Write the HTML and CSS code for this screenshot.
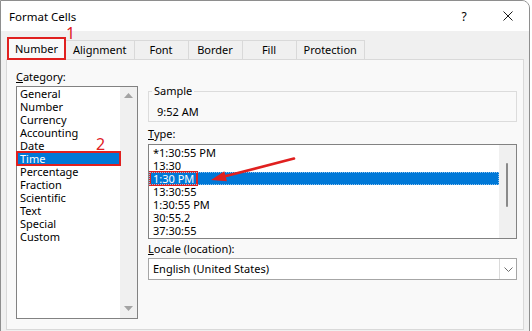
FILE: index.html
```html
<!DOCTYPE html>
<html lang="en">
<head>
<meta charset="utf-8">
<title>Format Cells</title>
<link rel="stylesheet" href="styles.css">
</head>
<body>
<div class="window">
  <header class="titlebar">
    <span class="title">Format Cells</span>
    <span class="caption-btn help">?</span>
    <span class="caption-btn close">
      <svg width="10" height="10" viewBox="0 0 10 10"><path d="M0.5 0.5 L9.5 9.5 M9.5 0.5 L0.5 9.5" stroke="#1a1a1a" stroke-width="1" fill="none"/></svg>
    </span>
  </header>

  <nav class="tabs">
    <div class="tab active">Number<span class="mark mark-1">1</span></div>
    <div class="tab">Alignment</div>
    <div class="tab">Font</div>
    <div class="tab">Border</div>
    <div class="tab">Fill</div>
    <div class="tab">Protection</div>
  </nav>

  <section class="panel">
    <div class="category">
      <div class="label"><u>C</u>ategory:</div>
      <div class="listbox cat-list">
        <ul class="items">
          <li>General</li>
          <li>Number</li>
          <li>Currency</li>
          <li>Accounting</li>
          <li>Date</li>
          <li class="selected boxed">Time<span class="mark mark-2">2</span></li>
          <li>Percentage</li>
          <li>Fraction</li>
          <li>Scientific</li>
          <li>Text</li>
          <li>Special</li>
          <li>Custom</li>
        </ul>
        <div class="vscroll arrows">
          <svg class="arrow" width="9" height="5" viewBox="0 0 9 5"><path d="M0 5 L4.5 0 L9 5 Z" fill="#a3a3a3"/></svg>
          <svg class="arrow" width="9" height="5" viewBox="0 0 9 5"><path d="M0 0 L4.5 5 L9 0 Z" fill="#a3a3a3"/></svg>
        </div>
      </div>
    </div>

    <div class="details">
      <fieldset class="sample">
        <legend>Sample</legend>
        <div class="sample-value">9:52 AM</div>
      </fieldset>

      <div class="label label-type"><u>T</u>ype:</div>
      <div class="listbox type-list">
        <ul class="items">
          <li>*1:30:55 PM</li>
          <li>13:30</li>
          <li class="selected focused"><span class="text-box">1:30 PM</span></li>
          <li>13:30:55</li>
          <li>1:30:55 PM</li>
          <li>30:55.2</li>
          <li>37:30:55</li>
        </ul>
        <div class="vscroll thin"><div class="thumb"></div></div>
      </div>

      <div class="label label-locale"><u>L</u>ocale (location):</div>
      <div class="combo">
        <span class="combo-text">English (United States)</span>
        <span class="combo-btn">
          <svg width="9" height="5" viewBox="0 0 9 5"><path d="M0.5 0.5 L4.5 4.5 L8.5 0.5" stroke="#6e6e6e" stroke-width="1" fill="none"/></svg>
        </span>
      </div>
    </div>
  </section>
</div>

<svg class="red-arrow" width="532" height="331" viewBox="0 0 532 331">
  <line x1="294" y1="158.5" x2="224" y2="176.6" stroke="#e0201f" stroke-width="2.6" stroke-linecap="round"/>
  <polygon points="211,180 224.3,171.3 226.9,181.3" fill="#e0201f"/>
</svg>
</body>
</html>
```

FILE: styles.css
```css
* {
  box-sizing: border-box;
}

body {
  margin: 0;
  width: 532px;
  height: 331px;
  overflow: hidden;
  position: relative;
  background: #ffffff;
  font-family: "Noto Sans", "Open Sans", sans-serif;
  font-size: 11px;
  color: #000;
}

.window {
  width: 530px;
  height: 332px;
  border: 1px solid #8e8e8e;
  border-top-right-radius: 8px;
  background: #f0f0f0;
  overflow: hidden;
}

/* title bar */
.titlebar {
  height: 30px;
  background: #ffffff;
  display: flex;
  align-items: center;
  padding-left: 8px;
}

.title {
  flex: 1;
  font-size: 11.5px;
}

.caption-btn {
  height: 30px;
  display: flex;
  align-items: center;
  justify-content: center;
}

.help {
  width: 46px;
  font-size: 12px;
}

.close {
  width: 42px;
}

/* tabs */
.tabs {
  display: flex;
  align-items: flex-end;
  height: 28px;
  padding-left: 6px;
}

.tab {
  height: 19px;
  min-width: 55px;
  padding: 0 7px;
  margin-right: -1px;
  text-align: center;
  line-height: 18px;
  border: 1px solid #d9d9d9;
  border-bottom: none;
  background: #f0f0f0;
}

.tab.active {
  position: relative;
  z-index: 1;
  height: 23px;
  margin-bottom: -1px;
  line-height: 22px;
  background: #f9f9f9;
  border-color: #e0201f;
  outline: 2px solid #e0201f;
  outline-offset: -2px;
}

.mark {
  position: absolute;
  color: #e0201f;
  font-size: 16px;
  line-height: 16px;
}

.mark-1 {
  left: 58px;
  top: -13px;
}

.mark-2 {
  left: 79px;
  top: -16px;
}

/* panel */
.panel {
  margin-left: 5px;
  width: 518px;
  height: 271px;
  border: 1px solid #d9d9d9;
  background: #f9f9f9;
  display: flex;
  gap: 10px;
  padding: 10px 6px 0 9px;
}

.category {
  width: 122px;
}

.label {
  line-height: 14px;
  height: 14px;
  margin-bottom: 2px;
}

.listbox {
  display: flex;
  background: #ffffff;
  border: 1px solid #828282;
}

.items {
  flex: 1;
  margin: 0;
  padding: 0;
  list-style: none;
}

.items li {
  height: 13px;
  line-height: 13px;
  padding-left: 3px;
  white-space: nowrap;
}

.items li.selected {
  position: relative;
  background: #0078d7;
  color: #ffffff;
}

.items li.boxed {
  outline: 2px solid #e0201f;
  outline-offset: -1px;
}

.cat-list {
  height: 233px;
}

.vscroll {
  width: 17px;
  background: #f0f0f0;
}

.vscroll.arrows {
  display: flex;
  flex-direction: column;
  justify-content: space-between;
  align-items: center;
  padding: 6px 0 7px;
}

/* right column */
.details {
  flex: 1;
  display: flex;
  flex-direction: column;
}

.sample {
  margin: 15px 0 0;
  padding: 0 8px 2px;
  border: 1px solid #dcdcdc;
  min-width: 0;
}

.sample legend {
  padding: 0 2px;
  margin-left: -5px;
  line-height: 12px;
}

.sample-value {
  margin-top: 8px;
  line-height: 14px;
}

.label-type {
  margin-top: 5px;
  margin-bottom: 3px;
}

.type-list {
  height: 95px;
}

.type-list .items {
  padding-top: 1px;
}

.type-list .items li {
  padding-left: 4px;
}

.type-list li.focused {
  outline: 1px dotted #8cc2ee;
  outline-offset: -1px;
}

.text-box {
  display: inline-block;
  height: 13px;
  margin-left: -3px;
  padding: 0 3px 0 3px;
  outline: 2px solid #e0201f;
  outline-offset: -1px;
}

.vscroll.thin {
  padding: 18px 0 0 7px;
}

.thumb {
  width: 2px;
  height: 44px;
  border-radius: 1px;
  background: #8a8a8a;
}

.label-locale {
  margin-top: 3px;
  margin-bottom: 2px;
}

.combo {
  height: 22px;
  display: flex;
  background: #ffffff;
  border: 1px solid #a6a6a6;
}

.combo-text {
  flex: 1;
  padding-left: 4px;
  line-height: 20px;
}

.combo-btn {
  width: 17px;
  border-left: 1px solid #dadada;
  display: flex;
  align-items: center;
  justify-content: center;
}

/* annotation overlay */
.red-arrow {
  position: absolute;
  left: 0;
  top: 0;
  pointer-events: none;
}
```
